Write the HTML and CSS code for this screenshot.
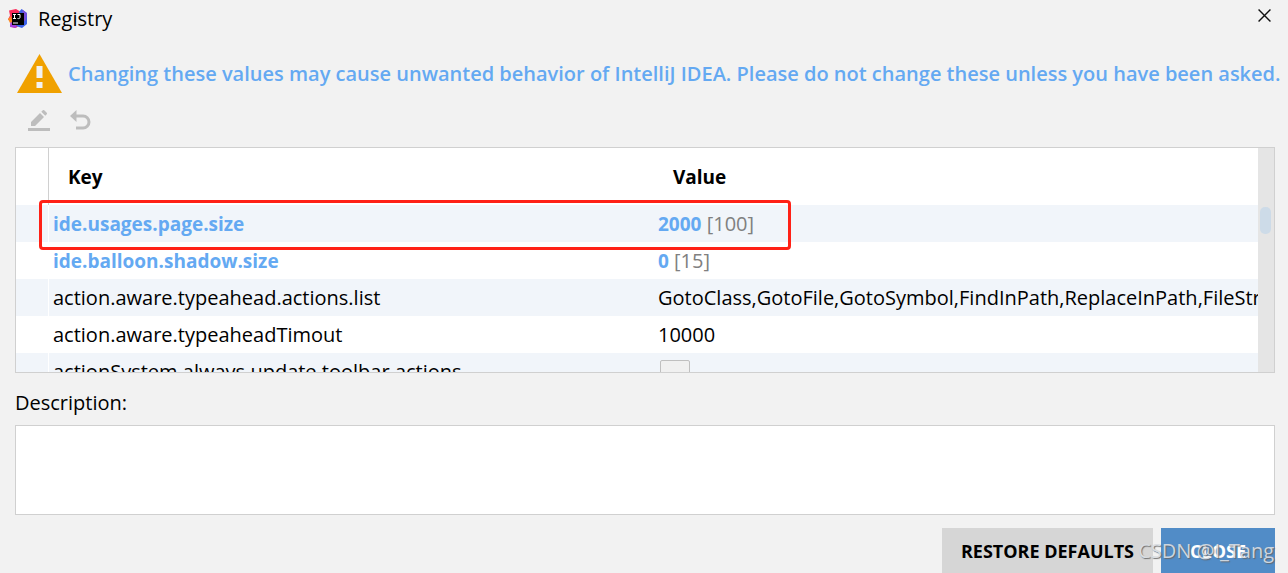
FILE: index.html
```html
<!DOCTYPE html>
<html lang="en">
<head>
<meta charset="utf-8">
<title>Registry</title>
<link rel="stylesheet" href="styles.css">
</head>
<body>
<div class="dialog">
  <header class="titlebar">
    <svg class="app-logo" viewBox="0 0 20 20" aria-hidden="true">
      <path d="M1 1.500 8 0l5 3v13l-6 3-5-1.500 1-5-3-2 2-4z" fill="#fc2a5a"/>
      <path d="M0 10 3 7l1.500 6L2 14z" fill="#fb8b24"/>
      <path d="M2.500 13.500h5l1 5.500-6.500-1z" fill="#a43fe0"/>
      <path d="m13.500 0 5.500 4v11l-5 4-6-2 3-14z" fill="#3d62ea"/>
      <path d="m14.500.500 4.500 4-1 6.500-3 2z" fill="#7a4fdc"/>
      <path d="M4 4h12v12h-12z" fill="#000"/>
      <path d="M5 5.500h3M6.500 5.500v4M5 9.500h3M9.500 5.500H12v3c0 1-1 1.300-2.500 1M5 14h5" fill="none" stroke="#fff" stroke-width="1"/>
    </svg>
    <h1 class="title">Registry</h1>
    <button class="window-close" type="button" aria-label="Close window">
      <svg viewBox="0 0 12 12" aria-hidden="true"><path d="m.5.500 11 11m0-11-11 11" stroke="#111" stroke-width="1.300"/></svg>
    </button>
  </header>

  <main class="content">
    <div class="warning">
      <svg class="warning-icon" viewBox="0 0 45 39" aria-hidden="true">
        <path d="M22.500 0 45 39H0z" fill="#f0a100"/>
        <path d="M19.500 12h6v12h-6zM19.500 28h6v6h-6z" fill="#f2f2f2"/>
      </svg>
      <p class="warning-text">Changing these values may cause unwanted behavior of IntelliJ IDEA. Please do not change these unless you have been asked.</p>
    </div>

    <div class="toolbar">
      <button class="tool" type="button" aria-label="Edit value">
        <svg viewBox="0 0 22 22" aria-hidden="true">
          <path d="M0 18h22v3H0zM3 12l9-9 4 4-9 9H3zM13.300 1.700 14.500.500c.7-.7 1.300-.7 2 0l2 2c.7.700.7 1.300 0 2l-1.200 1.200z" fill="#bdbdbd"/>
        </svg>
      </button>
      <button class="tool" type="button" aria-label="Revert value">
        <svg viewBox="0 0 22 22" aria-hidden="true">
          <path d="M0 6 6.500 0v12z" fill="#bdbdbd"/>
          <path d="M5 6h8a6 6 0 0 1 0 12H6" fill="none" stroke="#bdbdbd" stroke-width="3"/>
        </svg>
      </button>
    </div>

    <div class="registry">
      <div class="viewport">
        <table class="grid">
          <colgroup><col class="col-mark"><col class="col-key"><col class="col-value"></colgroup>
          <thead>
            <tr><td></td><th scope="col">Key</th><th scope="col">Value</th></tr>
          </thead>
          <tbody>
            <tr><td></td><td><span class="changed">ide.usages.page.size</span></td><td><span class="changed">2000</span> <span class="default">[100]</span></td></tr>
            <tr><td></td><td><span class="changed">ide.balloon.shadow.size</span></td><td><span class="changed">0</span> <span class="default">[15]</span></td></tr>
            <tr><td></td><td>action.aware.typeahead.actions.list</td><td>GotoClass,GotoFile,GotoSymbol,FindInPath,ReplaceInPath,FileStructurePopup</td></tr>
            <tr><td></td><td>action.aware.typeaheadTimout</td><td>10000</td></tr>
            <tr><td></td><td><label for="toolbar-actions">actionSystem.always.update.toolbar.actions</label></td><td><input class="check" id="toolbar-actions" type="checkbox"></td></tr>
          </tbody>
        </table>
      </div>
      <div class="scrollbar"><div class="thumb"></div></div>
      <div class="highlight"></div>
    </div>

    <label class="description-label" for="description">Description:</label>
    <textarea class="description" id="description" readonly></textarea>

    <footer class="actions">
      <button class="btn" type="button">RESTORE DEFAULTS</button>
      <button class="btn btn-primary" type="button">CLOSE</button>
      <span class="watermark">CSDN @I_Tang</span>
    </footer>
  </main>
</div>
</body>
</html>
```
FILE: styles.css
```css
* {
  box-sizing: border-box;
}

body {
  margin: 0;
  background: #f2f2f2;
  color: #000;
  font: 20px/28px "Open Sans", "Noto Sans", sans-serif;
}

button {
  border: 0;
  padding: 0;
  background: none;
  font: inherit;
}

svg {
  display: block;
}

.dialog {
  display: flex;
  flex-direction: column;
  height: 100vh;
  overflow: hidden;
}

.titlebar {
  display: flex;
  align-items: center;
  gap: 10px;
  height: 38px;
  padding: 0 17px 0 8px;
}

.app-logo {
  width: 20px;
  height: 20px;
}

.title {
  flex: 1;
  margin: 0;
  font-size: 20px;
  font-weight: 400;
}

.window-close {
  align-self: flex-start;
  padding: 9px 0;
}

.window-close svg {
  width: 13px;
  height: 13px;
}

.content {
  display: flex;
  flex: 1;
  flex-direction: column;
  min-height: 0;
  padding: 16px 13px 0 15px;
}

.warning {
  display: flex;
  align-items: center;
  gap: 6px;
  padding-left: 2px;
}

.warning-icon {
  flex: none;
  width: 45px;
  height: 39px;
}

.warning-text {
  margin: 0;
  color: #64a9f2;
  font-weight: 600;
  white-space: nowrap;
}

.toolbar {
  display: flex;
  gap: 20px;
  padding: 17px 13px 15px;
}

.tool svg {
  width: 22px;
  height: 22px;
}

.registry {
  position: relative;
  display: flex;
  flex: 1;
  min-height: 0;
  border: 1px solid #d0d0d0;
  background: #fff;
}

.viewport {
  flex: 1;
  min-width: 0;
  overflow: hidden;
}

.grid {
  width: 100%;
  table-layout: fixed;
  border-spacing: 0;
}

.col-mark {
  width: 33px;
}

.col-key {
  width: 605px;
}

.grid th {
  height: 57px;
  padding: 0 19px;
  font-size: 19px;
  font-weight: 700;
  text-align: left;
}

.grid td {
  height: 37px;
  padding: 0 4px;
  overflow: hidden;
  white-space: nowrap;
}

.grid tbody tr:nth-child(odd) {
  background: #f1f5fa;
}

.grid td:first-child {
  border-right: 1px solid #fff;
}

.grid thead td:first-child {
  border-right-color: #d0d0d0;
}

.changed {
  color: #64a9f2;
  font-size: 19px;
  font-weight: 700;
}

.default {
  color: #808080;
}

.check {
  display: block;
  width: 30px;
  height: 24px;
  margin: 0 2px;
  appearance: none;
  border: 1px solid #bfbfbf;
  border-radius: 2px;
  background: #f0f0f0;
}

.scrollbar {
  width: 16px;
  padding: 59px 3px 0 2px;
  background: #e5e5e5;
}

.thumb {
  height: 27px;
  border-radius: 5px;
  background: #cddbe8;
}

.highlight {
  position: absolute;
  top: 52px;
  left: 23px;
  width: 752px;
  height: 50px;
  border: 3px solid #ff2116;
  border-radius: 4px;
}

.description-label {
  padding: 16px 0 8px;
}

.description {
  flex: none;
  width: 100%;
  height: 90px;
  border: 1px solid #d0d0d0;
  background: #fff;
  font: inherit;
  resize: none;
}

.actions {
  position: relative;
  display: flex;
  justify-content: flex-end;
  gap: 8px;
  padding-top: 13px;
}

.btn {
  height: 45px;
  padding: 0 19px;
  background: #d6d6d6;
  font-size: 18px;
  font-weight: 700;
}

.btn-primary {
  padding: 0 29px;
  background: #518cc7;
  color: #fff;
}

.watermark {
  position: absolute;
  right: 1px;
  bottom: 8px;
  color: #d9dde2;
  opacity: 0.9;
  text-shadow: 1px 1px 1px #666;
}
```
